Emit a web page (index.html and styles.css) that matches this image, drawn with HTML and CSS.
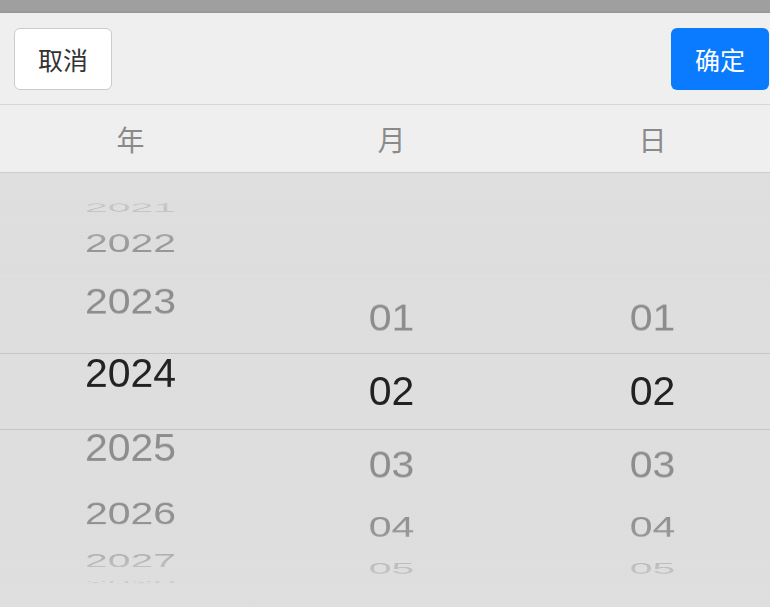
FILE: index.html
```html
<!DOCTYPE html>
<html lang="zh-CN">
<head>
<meta charset="utf-8">
<title>日期选择</title>
<link rel="stylesheet" href="styles.css">
</head>
<body>
<div class="sheet">
  <div class="toolbar">
    <button class="btn btn-cancel">取消</button>
    <button class="btn btn-ok">确定</button>
  </div>
  <div class="heads">
    <div class="head">年</div>
    <div class="head">月</div>
    <div class="head">日</div>
  </div>
  <div class="picker">
    <div class="col col-year">
      <div class="item k-3">2021</div>
      <div class="item k-2">2022</div>
      <div class="item k-1">2023</div>
      <div class="item k0 selected">2024</div>
      <div class="item k1">2025</div>
      <div class="item k2">2026</div>
      <div class="item k3">2027</div>
      <div class="item k4">2028</div>
    </div>
    <div class="col">
      <div class="item k-1">01</div>
      <div class="item k0 selected">02</div>
      <div class="item k1">03</div>
      <div class="item k2">04</div>
      <div class="item k3">05</div>
    </div>
    <div class="col">
      <div class="item k-1">01</div>
      <div class="item k0 selected">02</div>
      <div class="item k1">03</div>
      <div class="item k2">04</div>
      <div class="item k3">05</div>
    </div>
    <div class="band"></div>
    <div class="fade"></div>
  </div>
</div>
</body>
</html>
```

FILE: styles.css
```css
html, body {
  margin: 0;
  padding: 0;
}

body {
  background: #9f9f9f;
  overflow: hidden;
  height: 607px;
  font-family: "Liberation Sans", "Noto Sans CJK SC", sans-serif;
}

.sheet {
  width: 783px;
  margin-top: 13px;
  background: #efefef;
  box-shadow: 0 -1px 2px rgba(0, 0, 0, 0.08);
}

.toolbar {
  height: 91px;
  display: flex;
  justify-content: space-between;
  align-items: center;
  padding: 0 14px;
  border-bottom: 1px solid #d7d7d7;
}

.btn {
  width: 98px;
  height: 62px;
  border-radius: 6px;
  font-family: "Noto Sans CJK SC", sans-serif;
  font-size: 25px;
  padding: 0;
  cursor: pointer;
}

.btn-cancel {
  background: #ffffff;
  color: #333333;
  border: 1px solid #cbcbcb;
}

.btn-ok {
  background: #0a7bff;
  color: #ffffff;
  border: none;
}

.heads {
  display: grid;
  grid-template-columns: 261px 261px 261px;
  height: 67px;
  border-bottom: 1px solid #cdcdcd;
}

.head {
  display: flex;
  align-items: center;
  justify-content: center;
  font-family: "Noto Sans CJK SC", sans-serif;
  font-size: 28px;
  color: #8a8a8a;
}

.picker {
  position: relative;
  display: grid;
  grid-template-columns: 261px 261px 261px;
  height: 436px;
  background: #dedede;
  overflow: hidden;
}

.col {
  position: relative;
  --off: 0deg;
}

.col-year {
  --off: 5.4deg;
}

.item {
  position: absolute;
  left: 0;
  right: 0;
  top: 180px;
  height: 76px;
  line-height: 76px;
  text-align: center;
  font-size: 41px;
  color: #8d8d8d;
  transform: rotateX(calc(var(--k) * -22.5deg + var(--off))) translateZ(192px);
  backface-visibility: hidden;
}

.item.selected {
  color: #222222;
}

.k-3 { --k: -3; }
.k-2 { --k: -2; }
.k-1 { --k: -1; }
.k0 { --k: 0; }
.k1 { --k: 1; }
.k2 { --k: 2; }
.k3 { --k: 3; }
.k4 { --k: 4; }

.band {
  position: absolute;
  left: 0;
  right: 0;
  top: 180px;
  height: 75px;
  border-top: 1px solid #c6c6c6;
  border-bottom: 1px solid #c6c6c6;
  pointer-events: none;
}

.fade {
  position: absolute;
  inset: 0;
  pointer-events: none;
  background: linear-gradient(to bottom,
    rgba(222, 222, 222, 1) 0px,
    rgba(222, 222, 222, 0.9) 18px,
    rgba(222, 222, 222, 0.72) 33px,
    rgba(222, 222, 222, 0.55) 48px,
    rgba(222, 222, 222, 0.2) 68px,
    rgba(222, 222, 222, 0.08) 83px,
    rgba(222, 222, 222, 0) 118px,
    rgba(222, 222, 222, 0) 318px,
    rgba(222, 222, 222, 0.08) 353px,
    rgba(222, 222, 222, 0.2) 368px,
    rgba(222, 222, 222, 0.55) 388px,
    rgba(222, 222, 222, 0.72) 403px,
    rgba(222, 222, 222, 0.9) 418px,
    rgba(222, 222, 222, 1) 436px);
}
```
